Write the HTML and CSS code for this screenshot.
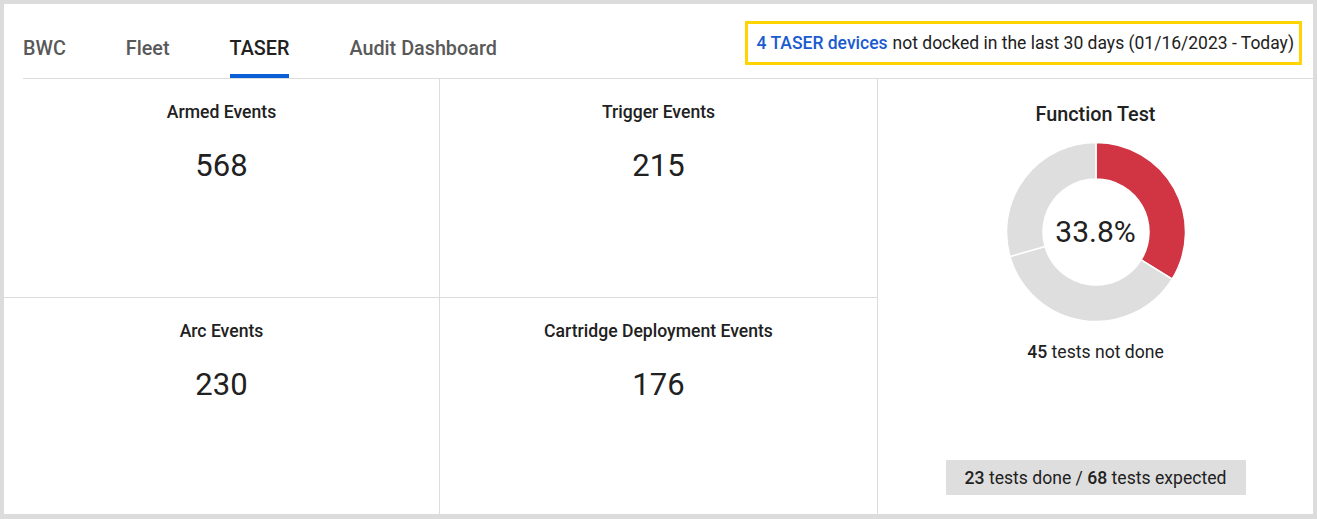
FILE: index.html
```html
<!DOCTYPE html>
<html>
<head>
<meta charset="utf-8">
<link rel="stylesheet" href="styles.css">
</head>
<body>
<div class="card">
  <header class="header">
    <nav class="tabs">
      <div class="tab">BWC</div>
      <div class="tab">Fleet</div>
      <div class="tab active">TASER</div>
      <div class="tab">Audit Dashboard</div>
    </nav>
    <div class="alert"><span class="alert-link">4 TASER devices</span> not docked in the last 30 days (01/16/2023 - Today)</div>
  </header>
  <main class="content">
    <section class="stats">
      <div class="stat r1 c1"><div class="stat-title">Armed Events</div><div class="stat-value">568</div></div>
      <div class="stat r1 c2"><div class="stat-title">Trigger Events</div><div class="stat-value">215</div></div>
      <div class="stat c1"><div class="stat-title">Arc Events</div><div class="stat-value">230</div></div>
      <div class="stat c2"><div class="stat-title">Cartridge Deployment Events</div><div class="stat-value">176</div></div>
    </section>
    <section class="ftest">
      <div class="ftest-title">Function Test</div>
      <div class="donut">
        <svg class="donut-svg" width="180" height="180" viewBox="0 0 180 180">
          <path d="M90 0.5 A89.5 89.5 0 0 1 166.09 137.11 L135.06 117.90 A53 53 0 0 0 90 37 Z" fill="#d13443" stroke="#fff" stroke-width="1.5"/>
          <path d="M166.09 137.11 A89.5 89.5 0 0 1 3.92 114.49 L39.02 104.50 A53 53 0 0 0 135.06 117.90 Z" fill="#dedede" stroke="#fff" stroke-width="1.5"/>
          <path d="M3.92 114.49 A89.5 89.5 0 0 1 90 0.5 L90 37 A53 53 0 0 0 39.02 104.50 Z" fill="#dedede" stroke="#fff" stroke-width="1.5"/>
        </svg>
        <div class="donut-label">33.8%</div>
      </div>
      <div class="ftest-notdone"><b>45</b> tests not done</div>
      <div class="ftest-summary"><b>23</b> tests done / <b>68</b> tests expected</div>
    </section>
  </main>
</div>
</body>
</html>
```
FILE: styles.css
```css
* { box-sizing: border-box; }
html, body { margin: 0; padding: 0; }
body {
  background: #dcdcdc;
  padding: 4px 4px 5px 4px;
  font-family: Roboto, "Liberation Sans", Arial, sans-serif;
  color: #212121;
  width: 1317px;
  height: 519px;
}
.card {
  background: #fff;
  width: 1309px;
  height: 510px;
  display: flex;
  flex-direction: column;
}
.header {
  margin-left: 19px;
  height: 75px;
  border-bottom: 1px solid #dcdcdc;
  display: flex;
  justify-content: space-between;
  align-items: flex-start;
  flex-shrink: 0;
}
.tabs {
  display: flex;
  gap: 60px;
  height: 74px;
  align-items: flex-end;
}
.tab {
  font-size: 19.8px;
  font-weight: 500;
  color: #595959;
  line-height: 24px;
  padding-bottom: 13px;
  border-bottom: 4px solid transparent;
}
.tab.active {
  color: #212121;
  border-bottom-color: #0b5fd6;
}
.alert {
  margin-top: 17px;
  margin-right: 11px;
  border: 3px solid #ffd400;
  height: 44px;
  padding: 0 5px 0 9px;
  display: flex;
  align-items: center;
  font-size: 17.5px;
  color: #212121;
  white-space: nowrap;
}
.alert-link {
  color: #1a5bd0;
  font-weight: 500;
  margin-right: 5px;
}
.content {
  flex: 1;
  display: grid;
  grid-template-columns: 874px 435px;
}
.stats {
  display: grid;
  grid-template-columns: 436px 438px;
  grid-template-rows: 219px 216px;
}
.stat {
  display: flex;
  flex-direction: column;
  align-items: center;
  padding-top: 22px;
}
.stat.r1 { border-bottom: 1px solid #dcdcdc; }
.stat.c1 { border-right: 1px solid #dcdcdc; }
.stat.c2 { border-right: 1px solid #dcdcdc; }
.stat-title {
  font-size: 17.6px;
  font-weight: 500;
  line-height: 22px;
}
.stat-value {
  margin-top: 25px;
  font-size: 31px;
  line-height: 36px;
}
.ftest {
  display: flex;
  flex-direction: column;
  align-items: center;
  padding-top: 25px;
}
.ftest-title {
  font-size: 19.8px;
  font-weight: 500;
  line-height: 22px;
}
.donut {
  margin-top: 16px;
  display: grid;
  place-items: center;
  width: 180px;
  height: 180px;
}
.donut-svg, .donut-label { grid-area: 1 / 1; }
.donut-svg { display: block; }
.donut-label {
  font-size: 30px;
  line-height: 34px;
}
.ftest-notdone {
  margin-top: 19px;
  font-size: 17.6px;
  line-height: 22px;
}
.ftest-notdone b, .ftest-summary b { font-weight: 500; }
.ftest-summary {
  margin-top: 97px;
  width: 300px;
  height: 35px;
  background: #dedede;
  display: flex;
  align-items: center;
  justify-content: center;
  font-size: 17.6px;
  white-space: pre;
}
```
